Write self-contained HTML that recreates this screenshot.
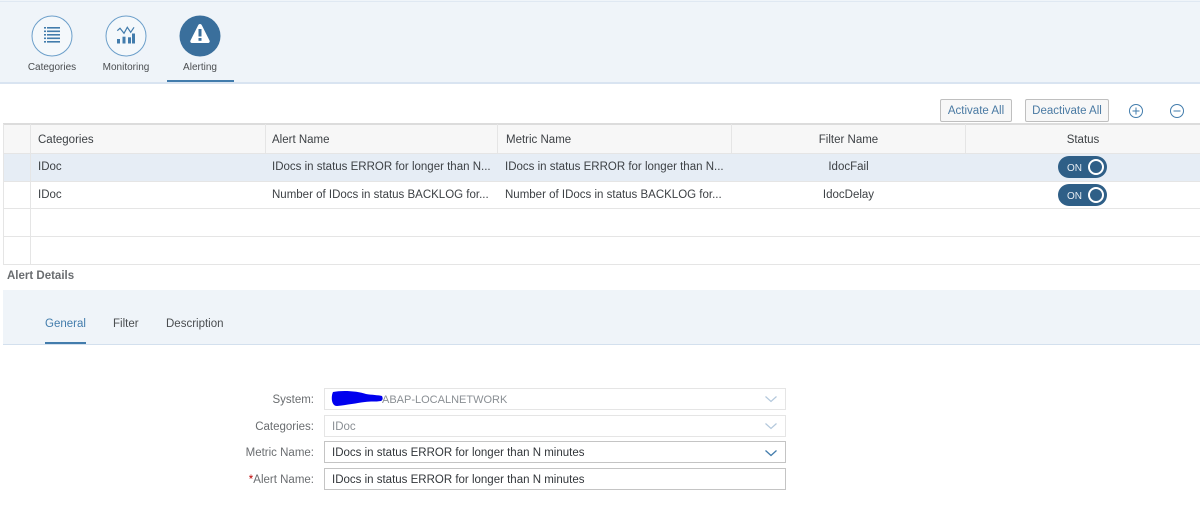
<!DOCTYPE html>
<html><head><meta charset="utf-8"><style>
html,body{margin:0;padding:0;background:#fff}
#p{position:relative;width:1200px;height:509px;overflow:hidden;background:#fff;font-family:"Liberation Sans",sans-serif;color:#3d4145;font-size:11.5px;filter:blur(.35px)}
#p div,#p span.a{position:absolute;white-space:nowrap}
.t{line-height:16px}
.c{text-align:center}
.vl{width:1px;background:#e5e5e5}
.hl{height:1px;left:3px;width:1197px;background:#e5e5e5}
.btn{height:21px;border:1px solid #bfbfbf;border-radius:2px;background:#f7f7f7;color:#4a7aa3;text-align:center;line-height:23px;box-sizing:content-box}
.tg{left:1058px;width:49px;height:22px;background:#2f5f87;border-radius:11px}
.tg .on{left:9px;top:5px;color:#e8eef4;font-size:10px;line-height:16px}
.tg .k{left:30px;top:3px;width:12px;height:12px;border:2px solid #fff;border-radius:50%}
.in{left:324px;width:460px;height:20px;border:1px solid #e5e5e5;background:#fff;line-height:22px;text-indent:7px;color:#8a8f94}
.in.e{border-color:#c4c4c4;color:#32363a}
.lb{width:314px;left:0;text-align:right;color:#6a6d70;line-height:16px}
</style></head><body><div id="p">
<div style="left:0;top:0;width:1200px;height:84px;background:#eff4f9"></div>
<div style="left:0;top:1px;width:1200px;height:1px;background:#dfe8f2"></div>
<div style="left:0;top:82px;width:1200px;height:2px;background:#d9e4f1"></div>
<div style="left:167px;top:80px;width:67px;height:2px;background:#427cac"></div>

<svg style="position:absolute;left:31px;top:15px" width="42" height="42" viewBox="0 0 42 42"><circle cx="21" cy="21" r="20" fill="#f4f8fb" stroke="#6c9fca" stroke-width="1"/><g fill="#427cac"><rect x="13" y="12" width="2" height="1.600"/><rect x="16" y="12" width="13" height="1.600"/><rect x="13" y="15.500" width="2" height="1.600"/><rect x="16" y="15.500" width="13" height="1.600"/><rect x="13" y="19" width="2" height="1.600"/><rect x="16" y="19" width="13" height="1.600"/><rect x="13" y="22.500" width="2" height="1.600"/><rect x="16" y="22.500" width="13" height="1.600"/><rect x="13" y="26" width="2" height="1.600"/><rect x="16" y="26" width="13" height="1.600"/></g></svg>
<svg style="position:absolute;left:105px;top:15px" width="42" height="42" viewBox="0 0 42 42"><circle cx="21" cy="21" r="20" fill="#f4f8fb" stroke="#6c9fca" stroke-width="1"/><path d="M12.300 15.700L15 13.300 19 18.300 22.300 12.300 25.700 17.300 29 12.300" fill="none" stroke="#427cac" stroke-width="1.200"/><g fill="#427cac"><rect x="12" y="24" width="3" height="4.500"/><rect x="17.500" y="21.700" width="3" height="6.800"/><rect x="23" y="22.300" width="3" height="6.200"/><rect x="27" y="18.500" width="3" height="10"/></g></svg>
<svg style="position:absolute;left:179px;top:15px" width="42" height="42" viewBox="0 0 42 42"><circle cx="21" cy="21" r="20.500" fill="#3a6f9c"/><g transform="translate(0,-1.500)"><path d="M21 10.500c.8 0 1.300.4 1.700 1l7.800 15.500c.6 1.200-.1 2.500-1.500 2.500H13c-1.400 0-2.100-1.300-1.500-2.500l7.800-15.500c.4-.6.900-1 1.700-1z" fill="#fff"/><rect x="19.500" y="15.500" width="3" height="7.500" fill="#3a6f9c"/><rect x="19.500" y="24.500" width="3" height="2.800" fill="#3a6f9c"/></g></svg>

<div class="t c" style="left:12px;width:80px;top:60px;font-size:10px;color:#4a4d50">Categories</div>
<div class="t c" style="left:86px;width:80px;top:60px;font-size:10px;color:#4a4d50">Monitoring</div>
<div class="t c" style="left:160px;width:80px;top:60px;font-size:10px;color:#4a4d50">Alerting</div>

<div class="btn" style="left:940px;top:99px;width:70px">Activate All</div>
<div class="btn" style="left:1025px;top:99px;width:82px">Deactivate All</div>
<svg style="position:absolute;left:1128px;top:103px" width="16" height="16" viewBox="0 0 16 16"><circle cx="8" cy="8" r="6.500" fill="none" stroke="#427cac"/><path d="M4.500 8h7M8 4.500v7" stroke="#427cac" fill="none"/></svg>
<svg style="position:absolute;left:1169px;top:103px" width="16" height="16" viewBox="0 0 16 16"><circle cx="8" cy="8" r="6.500" fill="none" stroke="#427cac"/><path d="M4.500 8h7" stroke="#427cac" fill="none"/></svg>

<div style="left:3px;top:124px;width:1197px;height:29px;background:#f7f7f7"></div>
<div style="left:3px;top:153px;width:1197px;height:28px;background:#e6edf5"></div>
<div class="hl" style="top:123px;height:2px;background:#dcdcdc"></div>
<div class="hl" style="top:153px"></div>
<div class="hl" style="top:181px"></div>
<div class="hl" style="top:208px"></div>
<div class="hl" style="top:236px"></div>
<div class="hl" style="top:264px"></div>
<div class="vl" style="left:3px;top:124px;height:141px"></div>
<div class="vl" style="left:30px;top:124px;height:141px"></div>
<div class="vl" style="left:265px;top:124px;height:29px"></div>
<div class="vl" style="left:497px;top:124px;height:29px"></div>
<div class="vl" style="left:731px;top:124px;height:29px"></div>
<div class="vl" style="left:965px;top:124px;height:29px"></div>

<div class="t" style="left:38px;top:132px">Categories</div>
<div class="t" style="left:272px;top:132px">Alert Name</div>
<div class="t" style="left:506px;top:132px">Metric Name</div>
<div class="t c" style="left:732px;width:233px;top:132px">Filter Name</div>
<div class="t c" style="left:966px;width:234px;top:132px">Status</div>

<div class="t" style="left:38px;top:159px">IDoc</div>
<div class="t" style="left:272px;top:159px">IDocs in status ERROR for longer than N...</div>
<div class="t" style="left:505px;top:159px">IDocs in status ERROR for longer than N...</div>
<div class="t c" style="left:732px;width:233px;top:159px">IdocFail</div>
<div class="tg" style="top:156px"><div class="on">ON</div><div class="k"></div></div>

<div class="t" style="left:38px;top:187px">IDoc</div>
<div class="t" style="left:272px;top:187px">Number of IDocs in status BACKLOG for...</div>
<div class="t" style="left:505px;top:187px">Number of IDocs in status BACKLOG for...</div>
<div class="t c" style="left:732px;width:233px;top:187px">IdocDelay</div>
<div class="tg" style="top:184px"><div class="on">ON</div><div class="k"></div></div>

<div class="t" style="left:7px;top:268px;font-size:11.500px;font-weight:bold;color:#6a6d70">Alert Details</div>

<div style="left:3px;top:290px;width:1197px;height:54px;background:#eff4f9"></div>
<div style="left:3px;top:344px;width:1197px;height:1px;background:#d3e0ee"></div>
<div style="left:45px;top:342px;width:41px;height:2px;background:#427cac"></div>
<div class="t" style="left:45px;top:316px;color:#427cac">General</div>
<div class="t" style="left:113px;top:316px;color:#4a4d50">Filter</div>
<div class="t" style="left:166px;top:316px;color:#4a4d50">Description</div>

<div class="lb" style="top:392px">System:</div>
<div class="lb" style="top:419px">Categories:</div>
<div class="lb" style="top:445px">Metric Name:</div>
<div class="lb" style="top:472px"><span style="color:#b00">*</span>Alert Name:</div>

<div class="in" style="top:388px"><span style="margin-left:50px;font-size:11px">ABAP-LOCALNETWORK</span></div>
<div class="in" style="top:415px">IDoc</div>
<div class="in e" style="top:441px">IDocs in status ERROR for longer than N minutes</div>
<div class="in e" style="top:468px">IDocs in status ERROR for longer than N minutes</div>
<svg style="position:absolute;left:330px;top:390px" width="54" height="18" viewBox="0 0 54 18"><path d="M3 2C12 0 28 1 36 4c6 1 12 1 16 2 1 2 1 4-1 5-6 1-10 0-16 1-8 1-18 3-28 4C1 16 1 6 3 2z" fill="#0000ee"/></svg>
<svg style="position:absolute;left:764px;top:394px" width="14" height="10" viewBox="0 0 14 10"><path d="M1.500 2.500L7 7.500l5.500-5" fill="none" stroke="#b3c8dc" stroke-width="1.200"/></svg>
<svg style="position:absolute;left:764px;top:421px" width="14" height="10" viewBox="0 0 14 10"><path d="M1.500 2.500L7 7.500l5.500-5" fill="none" stroke="#b3c8dc" stroke-width="1.200"/></svg>
<svg style="position:absolute;left:764px;top:448px" width="14" height="10" viewBox="0 0 14 10"><path d="M1.500 2.500L7 7.500l5.500-5" fill="none" stroke="#427cac" stroke-width="1.300"/></svg>
</div></body></html>
